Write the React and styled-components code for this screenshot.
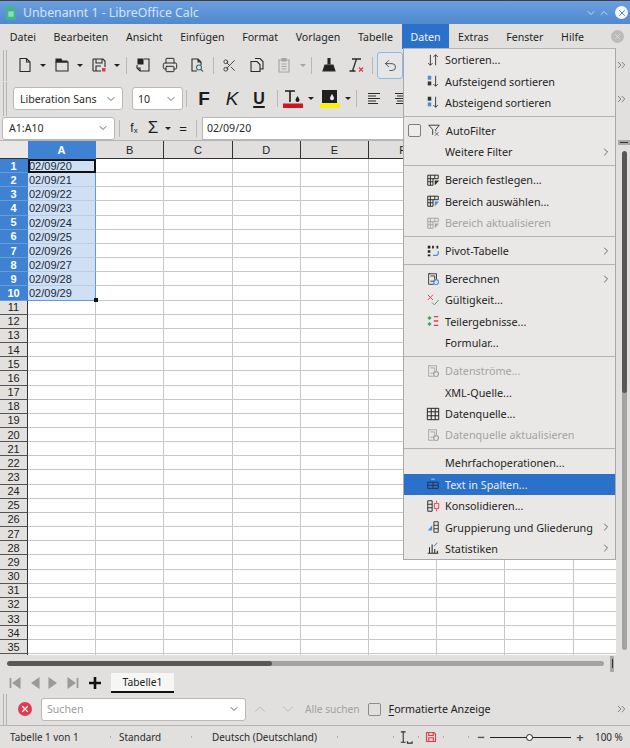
import React from "react";
import styled, { createGlobalStyle } from "styled-components";
import { ChevronDown, ChevronRight, ChevronUp, ChevronsRight, Printer, Scissors, Undo2, X } from "lucide-react";

const GlobalStyle = createGlobalStyle`
  html, body { margin: 0; padding: 0; }
  body { background: #e1e0de; font-family: "Noto Sans", sans-serif; color: #1f1f1f; }
`;

const Window = styled.div`
  position: relative;
  width: 630px;
  height: 748px;
  overflow: hidden;
  display: flex;
  flex-direction: column;
  background: #e1e0de;
`;

const TitleBar = styled.div`
  height: 24px;
  box-sizing: border-box;
  flex: none;
  display: flex;
  align-items: center;
  padding: 0 2px 0 6px;
  background: linear-gradient(#6b9fde, #5089cf);
  border-top: 1px solid #4a3c3c;
  color: #d5e4f6;
  font-size: 12.3px;
`;

const TitleText = styled.span`
  margin-left: 7px;
  flex: 1;
`;

const WinButton = styled.span`
  display: flex;
  width: 13px;
  justify-content: center;
  color: #dceafa;
`;

const CloseDot = styled.span`
  display: flex;
  align-items: center;
  justify-content: center;
  width: 13px;
  height: 13px;
  margin-left: 5px;
  border-radius: 50%;
  background: #f4f8fd;
  color: #4f88cf;
`;

const MenuBar = styled.div`
  height: 25px;
  flex: none;
  display: flex;
  align-items: stretch;
  padding-left: 1px;
  font-size: 10.6px;
`;

const MenuTitle = styled.div`
  display: flex;
  align-items: center;
  padding: 0 8.8px;
  background: ${(p) => (p.$open ? "#2b70c9" : "transparent")};
  color: ${(p) => (p.$open ? "#f1f6fc" : "#1f1f1f")};
`;

const DocClose = styled.div`
  display: flex;
  align-items: center;
  justify-content: center;
  width: 13px;
  height: 13px;
  margin: auto 6px auto auto;
  border-radius: 50%;
  background: #bcbbb9;
  color: #e1e0de;
`;

const ToolRow = styled.div`
  height: ${(p) => p.$h}px;
  flex: none;
  display: flex;
  align-items: center;
  position: relative;
`;

const Grip = styled.div`
  align-self: stretch;
  width: 2px;
  margin: 1px 5px 0 3px;
  border-left: 1px solid #b4b3b1;
  border-right: 1px solid #b4b3b1;
`;

const ToolButton = styled.div`
  width: ${(p) => p.$w || 27}px;
  height: 24px;
  flex: none;
  display: flex;
  align-items: center;
  justify-content: center;
  color: #2a2a2a;
`;

const Focused = styled(ToolButton)`
  width: 26px;
  height: 27px;
  margin-left: 2px;
  box-sizing: border-box;
  border: 1px solid #8dbbe8;
  border-radius: 3px;
  background: #e4e6e8;
`;

const DropArrow = styled.div`
  width: ${(p) => p.$w || 12}px;
  flex: none;
  display: flex;
  justify-content: center;
  &::after {
    content: "";
    border-left: 3px solid transparent;
    border-right: 3px solid transparent;
    border-top: 3px solid ${(p) => (p.$muted ? "#a5a5a5" : "#222")};
  }
`;

const Sep = styled.div`
  width: 1px;
  height: 17px;
  flex: none;
  margin-left: ${(p) => p.$l ?? 2.5}px;
  margin-right: ${(p) => p.$r ?? 2.5}px;
  background: #b8b7b5;
`;

const Combo = styled.div`
  width: ${(p) => p.$w}px;
  height: 23px;
  flex: none;
  box-sizing: border-box;
  display: flex;
  align-items: center;
  justify-content: space-between;
  padding: 0 5px 0 ${(p) => p.$pl || 6}px;
  margin-left: ${(p) => p.$ml || 0}px;
  background: #fff;
  border: 1px solid #b9b8b6;
  border-radius: 3px;
  font-size: 10.6px;
  color: #2a2a2a;
`;

const ComboHint = styled.span`
  color: #9d9d9d;
`;

const GlyphButton = styled(ToolButton)`
  font-size: ${(p) => p.$size || 17}px;
  font-weight: ${(p) => p.$weight || 700};
  font-style: ${(p) => (p.$italic ? "italic" : "normal")};
  text-decoration: ${(p) => (p.$under ? "underline" : "none")};
  text-decoration-thickness: 1.5px;
  text-underline-offset: 2px;
  font-family: "Liberation Sans", sans-serif;
  color: #1c1c1c;
  small { font-size: 8px; margin-top: 5px; }
`;

const OverflowMark = styled.div`
  position: absolute;
  right: 2px;
  top: 50%;
  transform: translateY(-50%);
  display: flex;
  color: #444;
`;

const FormulaBar = styled.div`
  height: 24px;
  flex: none;
  display: flex;
  align-items: center;
  padding-left: 2px;
`;

const FormulaInput = styled.div`
  width: 409px;
  height: 23px;
  flex: none;
  margin-left: 1px;
  box-sizing: border-box;
  display: flex;
  align-items: center;
  padding-left: 4px;
  background: #fff;
  border: 1px solid #b9b8b6;
  font-size: 10.6px;
  color: #2a2a2a;
`;

const Body = styled.div`
  height: 515px;
  flex: none;
  display: flex;
`;

const Sheet = styled.div`
  position: relative;
  width: 616px;
  flex: none;
  overflow: hidden;
  background: #fff;
  border-top: 1px solid #b5b4b2;
  box-sizing: border-box;
`;

const GridRow = styled.div`
  display: flex;
  height: ${(p) => p.$h}px;
`;

const Corner = styled.div`
  width: 28px;
  flex: none;
  box-sizing: border-box;
  background: #e9e8e6;
  border-bottom: 1px solid #333;
`;

const ColHead = styled.div`
  width: 68.2px;
  flex: none;
  box-sizing: border-box;
  display: flex;
  align-items: center;
  justify-content: center;
  font: ${(p) => (p.$on ? 700 : 400)} 11px "Liberation Sans", sans-serif;
  background: ${(p) => (p.$on ? "#3f82d2" : "#e0dfdd")};
  color: ${(p) => (p.$on ? "#fff" : "#222")};
  border-right: 1px solid ${(p) => (p.$on ? "#3f82d2" : "#333")};
  border-bottom: 1px solid ${(p) => (p.$on ? "#3f82d2" : "#333")};
`;

const RowHead = styled.div`
  width: 28px;
  flex: none;
  box-sizing: border-box;
  display: flex;
  align-items: center;
  justify-content: center;
  font: ${(p) => (p.$on ? 700 : 400)} 11px "Liberation Sans", sans-serif;
  background: ${(p) => (p.$on ? "#3f82d2" : "#e2e1df")};
  color: ${(p) => (p.$on ? "#fff" : "#222")};
  border-right: 1px solid ${(p) => (p.$on ? "#3f82d2" : "#333")};
  border-bottom: 1px solid ${(p) => (p.$on ? "#6a9cdc" : "#555")};
`;

const Cell = styled.div`
  width: 68.2px;
  flex: none;
  box-sizing: border-box;
  padding-left: 1px;
  white-space: nowrap;
  font: 11px/14px "Liberation Sans", sans-serif;
  color: #1d2735;
  background: ${(p) => (p.$sel ? "#cfe0f4" : "#fff")};
  border-right: 1px solid ${(p) => (p.$sel ? "#5c9ae0" : "#c8c8c8")};
  border-bottom: 1px solid ${(p) => (p.$last ? "#5c9ae0" : p.$sel ? "#b9cde6" : "#c8c8c8")};
  ${(p) => p.$active && "outline: 2px solid #111; outline-offset: -2px;"}
`;

const FillHandle = styled.div`
  position: absolute;
  left: 94px;
  top: 157px;
  width: 4px;
  height: 4px;
  background: #111;
`;

const VScroll = styled.div`
  width: 14px;
  flex: none;
  display: flex;
  flex-direction: column;
  align-items: center;
  padding-left: 2px;
  box-sizing: border-box;
`;

const VSplit = styled.div`
  width: 100%;
  height: 5px;
  margin-bottom: 6px;
  display: flex;
  align-items: center;
  justify-content: center;
  background: #a9a8a6;
  &::after {
    content: "";
    width: 8px;
    height: 1px;
    background: #333;
  }
`;

const VTrack = styled.div`
  width: 5px;
  flex: 1;
  margin-bottom: 5px;
  border-radius: 3px;
  background: #a3a3a1;
  overflow: hidden;
`;

const VThumb = styled.div`
  height: 242px;
  border-radius: 3px;
  background: #585857;
`;

const HScrollRow = styled.div`
  height: 17px;
  flex: none;
  display: flex;
  align-items: center;
  padding: 0 16px 0 7px;
`;

const HTrack = styled.div`
  width: 597px;
  height: 5px;
  flex: none;
  margin-right: 6px;
  border-radius: 3px;
  background: #a3a3a1;
  overflow: hidden;
`;

const HThumb = styled.div`
  width: 265px;
  height: 100%;
  border-radius: 3px;
  background: #585857;
`;

const HSplit = styled.div`
  width: 4px;
  height: 16px;
  flex: none;
  display: flex;
  justify-content: center;
  background: #a9a8a6;
  &::after {
    content: "";
    width: 1px;
    height: 9px;
    margin-top: 3px;
    background: #333;
  }
`;

const TabBar = styled.div`
  height: 21px;
  flex: none;
  display: flex;
  align-items: center;
  padding-left: 7px;
`;

const SheetTab = styled.div`
  width: 63px;
  height: 20px;
  margin-left: 3px;
  box-sizing: border-box;
  display: flex;
  align-items: center;
  justify-content: center;
  background: #f6f6f5;
  border-bottom: 2px solid #111;
  font-size: 10.3px;
  color: #222;
`;

const FindBar = styled.div`
  position: relative;
  height: 32px;
  flex: none;
  display: flex;
  align-items: center;
`;

const FindCheck = styled.div`
  width: 13px;
  height: 13px;
  flex: none;
  box-sizing: border-box;
  margin-left: 8px;
  border: 1px solid #8b8b89;
  border-radius: 2px;
`;

const FindHint = styled.span`
  margin-left: 4px;
  font-size: 10.2px;
  color: #a2a2a0;
`;

const FindLabel = styled.span`
  margin-left: 8px;
  font-size: 10.7px;
  color: #222;
  u { text-underline-offset: 2px; }
`;

const StatusBar = styled.div`
  height: 23px;
  flex: none;
  box-sizing: border-box;
  display: flex;
  align-items: center;
  border-top: 1px solid #b5b4b2;
  font-size: 9.9px;
  color: #2a2a2a;
`;

const StatusCell = styled.div`
  width: ${(p) => p.$w}px;
  flex: none;
  box-sizing: border-box;
  display: flex;
  align-items: center;
  justify-content: ${(p) => p.$align || "flex-start"};
  padding-left: ${(p) => p.$pad || 0}px;
  white-space: nowrap;
`;

const Dot = styled.span`
  width: 1px;
  height: 2px;
  flex: none;
  background: #b0afad;
`;

const ZoomGroup = styled.div`
  display: flex;
  align-items: center;
  width: 122px;
  flex: none;
  padding-left: 8px;
  box-sizing: border-box;
`;

const ZoomSign = styled.span`
  width: 8px;
  flex: none;
  text-align: center;
  font-size: 13px;
  font-weight: 700;
  line-height: 10px;
  color: #555;
`;

const ZoomTrack = styled.div`
  position: relative;
  width: 81px;
  height: 1px;
  flex: none;
  margin: 0 5px 0 5px;
  background: #222;
`;

const ZoomKnob = styled.span`
  position: absolute;
  left: 36px;
  top: -3px;
  width: 5px;
  height: 5px;
  border: 1px solid #222;
  border-radius: 50%;
  background: #fff;
`;

const Menu = styled.div`
  position: absolute;
  left: 403px;
  top: 48px;
  width: 213px;
  box-sizing: border-box;
  background: #e9e8e6;
  border: 1px solid #a9a8a6;
  border-top-color: #b5b4b2;
  font-size: 10.8px;
`;

const MenuRow = styled.div`
  height: 21.4px;
  display: flex;
  align-items: center;
  color: ${(p) => (p.$active ? "#e6eefa" : p.$off ? "#a3a3a1" : "#1f1f1f")};
  background: ${(p) => (p.$active ? "#2b70c9" : "transparent")};
  white-space: nowrap;
`;

const MenuCheck = styled.div`
  width: 13px;
  height: 13px;
  flex: none;
  box-sizing: border-box;
  margin-left: 4px;
  border: 1px solid #7e7e7c;
  border-radius: 2px;
  background: #eeedeb;
`;

const MenuIcon = styled.div`
  width: 16px;
  height: 16px;
  flex: none;
  display: flex;
  align-items: center;
  justify-content: center;
  margin-left: ${(p) => (p.$afterCheck ? 5 : 21)}px;
  margin-right: 4px;
  svg { width: 14px; height: 14px; }
`;

const MenuLabel = styled.span`
  flex: 1;
`;

const MenuArrow = styled.span`
  display: flex;
  margin-right: 3px;
  color: #333;
`;

const MenuDivider = styled.div`
  height: 6.6px;
  display: flex;
  align-items: center;
  &::after {
    content: "";
    width: 100%;
    height: 1px;
    background: #b4b3b1;
  }
`;

const Ico = ({ s = 16, w = 1.1, c = "#2a2a2a", children }) => (
  <svg width={s} height={s} viewBox="0 0 16 16" fill="none" stroke={c} strokeWidth={w}>
    {children}
  </svg>
);

const NewDoc = () => <Ico><path d="M3 1.5h6.5L13 5v9.5H3zM9.5 1.5V5H13" /></Ico>;
const OpenDoc = () => <Ico><path d="M2 5h12v9H2z" /><path d="M2 2h5l1 2h5v1H2z" fill="#222" /></Ico>;
const SaveDoc = () => (
  <Ico>
    <path d="M2 2h10l2 2v6M10 14H2zM2 2v12M5 2v4h6V2M5 14v-5h5" />
    <rect x="11" y="11" width="3.5" height="3.5" fill="#e23b4e" stroke="none" />
  </Ico>
);
const PdfDoc = () => (
  <Ico>
    <path d="M9 2h5v12H5l-3-3V8" />
    <path d="M3 2h5v5H3z" fill="#222" />
    <path d="M5 14v-3H2" />
  </Ico>
);
const Preview = () => (
  <Ico>
    <path d="M8 14H3V2h6l3 3v3M9 2v3h3" />
    <circle cx="10" cy="10.5" r="2.5" stroke="#2f6f79" />
    <path d="M12 12.5l2 2" stroke="#2f6f79" />
  </Ico>
);
const CopyDoc = () => (
  <Ico>
    <path d="M6 1.5h5l3 3V12h-3" />
    <path d="M2 4.5h6l3 3v7H2z" fill="#e1e0de" />
  </Ico>
);
const PasteDoc = () => (
  <Ico c="#a3a3a1">
    <path d="M3 3h10v12H3z" />
    <path d="M6 1.5h4V4H6z" fill="#a3a3a1" />
    <path d="M5.5 7h5M5.5 9.5h5M5.5 12h5" />
  </Ico>
);
const Brush = () => (
  <Ico>
    <path d="M7 1.5h2V7H7z" fill="#222" />
    <path d="M4 8h8l2 6H2z" fill="#222" />
  </Ico>
);
const ClearFormat = () => (
  <Ico w={1.3}>
    <path d="M4 2h9M8.5 2L4.5 14M1.5 14h6" />
    <path d="M11 10.5l4 4M15 10.5l-4 4" stroke="#e23b4e" />
  </Ico>
);
const FontColor = () => (
  <svg width="22" height="20" viewBox="0 0 22 20" fill="none">
    <path d="M3 2h10M8 2v11" stroke="#1c1c1c" strokeWidth="1.6" />
    <path d="M15.5 7c-1.5 2.5-2 3.2-2 4a2 2 0 0 0 4 0c0-.8-.5-1.5-2-4z" fill="#1c1c1c" />
    <rect x="1" y="14.5" width="20" height="4.5" fill="#c8191e" />
  </svg>
);
const BackColor = () => (
  <svg width="20" height="20" viewBox="0 0 20 20" fill="none">
    <rect x="2" y="1" width="15" height="13" fill="#1f1f1f" />
    <path d="M12 5c-1.5 2.5-2 3.2-2 4.2a2 2 0 0 0 4 0c0-1-.5-1.7-2-4.2z" fill="#e8e8e8" />
    <rect x="0" y="14.5" width="20" height="4.5" fill="#fbf200" />
  </svg>
);
const AlignLeft = () => (
  <Ico>
    <path d="M2 2.5h12M2 5h8M2 7.5h12M2 10h8M2 12.5h10" />
  </Ico>
);
const AlignMid = () => (
  <Ico>
    <path d="M2 2.5h12M4 5h8M2 7.5h12M4 10h8M3 12.5h10" />
  </Ico>
);
const Triangle = ({ dir, bar }) => (
  <Ico c="#9a9a98">
    {bar === "l" && <path d="M2.5 3v10" strokeWidth="1.8" />}
    {dir === "l" ? <path d="M12 3v10L5 8z" fill="#9a9a98" /> : <path d="M4 3v10l7-5z" fill="#9a9a98" />}
    {bar === "r" && <path d="M13.5 3v10" strokeWidth="1.8" />}
  </Ico>
);
const PlusBold = () => (
  <Ico s={16} w={2.6} c="#111">
    <path d="M8 2v12M2 8h12" />
  </Ico>
);
const ErrorDot = () => (
  <svg width="16" height="16" viewBox="0 0 16 16" fill="none">
    <circle cx="8" cy="8" r="7" fill="#e23b50" />
    <path d="M5.3 5.3l5.4 5.4M10.7 5.3l-5.4 5.4" stroke="#fff" strokeWidth="1.3" />
  </svg>
);
const StatusCursor = () => (
  <Ico s={15}>
    <path d="M2 2h5M2 13h5M4.5 2v11M9 12v2h5v-2" />
  </Ico>
);
const StatusSave = () => (
  <Ico s={12} c="#e23b50" w={1.5}>
    <path d="M2 2h10l2 2v10H2zM5 2v4h6V2M5 14v-5h6v5" />
  </Ico>
);

const SortIcon = () => (
  <Ico w={1}>
    <path d="M5 2v12M2.5 11.5L5 14l2.5-2.5M11 14V2M8.5 4.5L11 2l2.5 2.5" />
  </Ico>
);
const SortAz = ({ flip }) => (
  <Ico w={1}>
    <rect x="2" y={flip ? 8.5 : 2} width="4" height="4.5" fill="#4a90d9" stroke="none" />
    <rect x="2" y={flip ? 2 : 8.5} width="4" height="4.5" fill="#333" stroke="none" />
    <path d="M11 2v12M8.5 11.5L11 14l2.5-2.5" />
  </Ico>
);
const FilterIcon = () => (
  <Ico w={1}>
    <path d="M2 2.5h12L10 7.5v2M2 2.5l4.5 5v6" />
    <path d="M9 10.5l4 4M13 10.5l-4 4" stroke="#555" />
  </Ico>
);
const RangeIcon = ({ c = "#2a2a2a", mark = "#2a2a2a" }) => (
  <Ico w={1.1} c={c}>
    <path d="M2 2.5h12v4H8v7.5H2zM2 6.5h6M2 10h6M5 2.5V14M10 2.5v4" />
    <path d="M10 8.5h5L12 12l-2 2z" fill={mark} stroke="none" />
  </Ico>
);
const PivotIcon = () => (
  <Ico w={1}>
    <path d="M2 2h3v3H2zM7 2h2v3H7zM12 2h2v3h-2zM2 7h3v3H2zM2 12h3v2H2z" fill="#222" stroke="none" />
    <path d="M8 13h4c1.5 0 2-1 2-3V8" stroke="#4a90d9" strokeWidth="1.4" />
  </Ico>
);
const CalcIcon = ({ c = "#2a2a2a", mark = "#4a90d9" }) => (
  <Ico w={1} c={c}>
    <path d="M9 14H3V2h9v6M3 2l1.5-.5" />
    <path d="M5 4.5h5v6H5" />
    <circle cx="11.5" cy="11.5" r="2.8" stroke={mark} strokeWidth="1.3" />
  </Ico>
);
const ValidityIcon = () => (
  <Ico w={1.1}>
    <path d="M2 2l6 6M8 2L2 8" stroke="#e23b50" />
    <path d="M7 11l2.5 2.5L14.5 8" stroke="#3fa35b" />
  </Ico>
);
const SubtotalIcon = () => (
  <Ico w={1.6}>
    <path d="M2 4.5h4M4 2.5v4M2 11.5h4M4 9.5v4" stroke="#2f9e5b" />
    <path d="M9 3h5M9 8h5M9 13h5" stroke="#e23b50" />
  </Ico>
);
const GridIcon = ({ c = "#1f1f1f" }) => (
  <Ico w={1.1} c={c}>
    <path d="M1.5 1.5h13v13h-13zM1.5 5.5h13M1.5 10h13M6 1.5v13M10.5 1.5v13" />
  </Ico>
);
const ColumnsIcon = () => (
  <Ico w={1} c="#1c2f45">
    <path d="M2 6h12v7H2zM2 9.5h12M8 6v7" />
    <path d="M6 2.5h4" stroke="#79b3ea" strokeWidth="1.6" />
  </Ico>
);
const ConsolidateIcon = () => (
  <Ico w={1.1}>
    <path d="M2 2h5v12H2zM2 6h5M2 10h5" />
    <path d="M9.5 5h5v6h-5z" stroke="#e23b50" />
    <path d="M12 2v2M12 12v2" stroke="#e23b50" />
  </Ico>
);
const GroupIcon = () => (
  <Ico w={1}>
    <path d="M9 2h5v12H9zM9 6h5M9 10h5" />
    <path d="M2 12l5-6v6z" fill="#4a90d9" stroke="none" />
  </Ico>
);
const StatsIcon = () => (
  <Ico w={1.2}>
    <path d="M2 14h12M4 14V7M7 14V4M10 14v-5M13 14v-3" />
    <path d="M9 6l4-4" stroke="#4a90d9" />
  </Ico>
);

const menuItems = [
  { label: "Sortieren...", icon: <SortIcon /> },
  { label: "Aufsteigend sortieren", icon: <SortAz /> },
  { label: "Absteigend sortieren", icon: <SortAz flip /> },
  "sep",
  { label: "AutoFilter", icon: <FilterIcon />, check: true },
  { label: "Weitere Filter", sub: true },
  "sep",
  { label: "Bereich festlegen...", icon: <RangeIcon /> },
  { label: "Bereich auswählen...", icon: <RangeIcon mark="#4a90d9" /> },
  { label: "Bereich aktualisieren", icon: <RangeIcon c="#a3a3a1" mark="#a3a3a1" />, off: true },
  "sep",
  { label: "Pivot-Tabelle", icon: <PivotIcon />, sub: true },
  "sep",
  { label: "Berechnen", icon: <CalcIcon />, sub: true },
  { label: "Gültigkeit...", icon: <ValidityIcon /> },
  { label: "Teilergebnisse...", icon: <SubtotalIcon /> },
  { label: "Formular..." },
  "sep",
  { label: "Datenströme...", icon: <CalcIcon c="#a3a3a1" mark="#a3a3a1" />, off: true },
  { label: "XML-Quelle..." },
  { label: "Datenquelle...", icon: <GridIcon /> },
  { label: "Datenquelle aktualisieren", icon: <CalcIcon c="#a3a3a1" mark="#a3a3a1" />, off: true },
  "sep",
  { label: "Mehrfachoperationen..." },
  { label: "Text in Spalten...", icon: <ColumnsIcon />, active: true },
  { label: "Konsolidieren...", icon: <ConsolidateIcon /> },
  { label: "Gruppierung und Gliederung", icon: <GroupIcon />, sub: true },
  { label: "Statistiken", icon: <StatsIcon />, sub: true },
];

const menuTitles = ["Datei", "Bearbeiten", "Ansicht", "Einfügen", "Format", "Vorlagen", "Tabelle"];
// G, H and I sit behind the open menu, so their header letters never show
const columns = ["A", "B", "C", "D", "E", "F", "", " ", "  "];
const rows = Array.from({ length: 36 }, (_, i) => i + 1);

const DataMenu = () => (
  <Menu>
    {menuItems.map((item, i) =>
      item === "sep" ? (
        <MenuDivider key={i} />
      ) : (
        <MenuRow key={i} $off={item.off} $active={item.active}>
          {item.check && <MenuCheck />}
          <MenuIcon $afterCheck={item.check}>{item.icon}</MenuIcon>
          <MenuLabel>{item.label}</MenuLabel>
          {item.sub && (
            <MenuArrow>
              <ChevronRight size={12} strokeWidth={1.4} />
            </MenuArrow>
          )}
        </MenuRow>
      )
    )}
  </Menu>
);

const Grid = () => (
  <Sheet>
    <GridRow $h={18}>
      <Corner />
      {columns.map((c) => (
        <ColHead key={c} $on={c === "A"}>{c}</ColHead>
      ))}
    </GridRow>
    {rows.map((r) => (
      <GridRow key={r} $h={14.16}>
        <RowHead $on={r <= 10}>{r <= 35 ? r : ""}</RowHead>
        {columns.map((c) => (
          <Cell
            key={c}
            $sel={c === "A" && r <= 10}
            $last={c === "A" && r === 10}
            $active={c === "A" && r === 1}
          >
            {c === "A" && r <= 10 ? `02/09/${19 + r}` : ""}
          </Cell>
        ))}
      </GridRow>
    ))}
    <FillHandle />
  </Sheet>
);

export default function App() {
  return (
    <Window>
      <GlobalStyle />
      <TitleBar>
        <svg width="10" height="14" viewBox="0 0 9 13">
          <path d="M0 0h6.5L9 2.5V13H0z" fill="#43b58a" />
          <path d="M2 5h5v5H2z" fill="#8fdcbc" />
        </svg>
        <TitleText>Unbenannt 1 - LibreOffice Calc</TitleText>
        <WinButton><ChevronDown size={12} strokeWidth={1.6} /></WinButton>
        <WinButton><ChevronUp size={12} strokeWidth={1.6} /></WinButton>
        <CloseDot><X size={10} strokeWidth={2.4} /></CloseDot>
      </TitleBar>

      <MenuBar>
        {menuTitles.map((t) => (
          <MenuTitle key={t}>{t}</MenuTitle>
        ))}
        <MenuTitle $open>Daten</MenuTitle>
        <MenuTitle>Extras</MenuTitle>
        <MenuTitle>Fenster</MenuTitle>
        <MenuTitle>Hilfe</MenuTitle>
        <DocClose><X size={9} strokeWidth={2} /></DocClose>
      </MenuBar>

      <ToolRow $h={32}>
        <Grip />
        <ToolButton $w={25}><NewDoc /></ToolButton>
        <DropArrow />
        <ToolButton $w={25}><OpenDoc /></ToolButton>
        <DropArrow />
        <ToolButton $w={25}><SaveDoc /></ToolButton>
        <DropArrow />
        <Sep />
        <ToolButton><PdfDoc /></ToolButton>
        <ToolButton><Printer size={16} strokeWidth={1.5} /></ToolButton>
        <ToolButton><Preview /></ToolButton>
        <Sep />
        <ToolButton><Scissors size={15} strokeWidth={1.3} /></ToolButton>
        <ToolButton><CopyDoc /></ToolButton>
        <ToolButton><PasteDoc /></ToolButton>
        <DropArrow $w={11} $muted />
        <Sep $l={3} $r={3} />
        <ToolButton><Brush /></ToolButton>
        <ToolButton><ClearFormat /></ToolButton>
        <Sep />
        <Focused><Undo2 size={15} strokeWidth={1.2} /></Focused>
        <OverflowMark><ChevronsRight size={13} strokeWidth={1.2} /></OverflowMark>
      </ToolRow>

      <ToolRow $h={35}>
        <Grip />
        <Combo $w={110} $ml={1}>Liberation Sans<ChevronDown size={12} strokeWidth={1.4} /></Combo>
        <Combo $w={51} $ml={9} $pl={5}>10<ChevronDown size={12} strokeWidth={1.4} /></Combo>
        <Sep $l={3} $r={1} />
        <GlyphButton $w={32} $size={19}>F</GlyphButton>
        <GlyphButton $w={24} $size={19} $weight={400} $italic>K</GlyphButton>
        <GlyphButton $w={30} $size={16} $under>U</GlyphButton>
        <Sep $l={3} $r={2} />
        <ToolButton $w={26}><FontColor /></ToolButton>
        <DropArrow $w={10} />
        <ToolButton $w={28}><BackColor /></ToolButton>
        <DropArrow $w={8} />
        <Sep $l={4} $r={3} />
        <ToolButton><AlignLeft /></ToolButton>
        <ToolButton><AlignMid /></ToolButton>
        <OverflowMark><ChevronsRight size={13} strokeWidth={1.2} /></OverflowMark>
      </ToolRow>

      <FormulaBar>
        <Combo $w={113}>A1:A10<ChevronDown size={12} strokeWidth={1.4} /></Combo>
        <Sep $l={4} $r={4} />
        <GlyphButton $w={20} $size={12} $weight={400}>f<small>x</small></GlyphButton>
        <GlyphButton $w={18} $size={17} $weight={400}>Σ</GlyphButton>
        <DropArrow $w={12} />
        <GlyphButton $w={18} $size={13} $weight={400}>=</GlyphButton>
        <Sep $l={4} $r={4} />
        <FormulaInput>02/09/20</FormulaInput>
      </FormulaBar>

      <Body>
        <Grid />
        <VScroll>
          <VSplit />
          <VTrack><VThumb /></VTrack>
        </VScroll>
      </Body>

      <HScrollRow>
        <HTrack><HThumb /></HTrack>
        <HSplit />
      </HScrollRow>

      <TabBar>
        <ToolButton $w={18}><Triangle dir="l" bar="l" /></ToolButton>
        <ToolButton $w={19}><Triangle dir="l" /></ToolButton>
        <ToolButton $w={18}><Triangle dir="r" /></ToolButton>
        <ToolButton $w={20}><Triangle dir="r" bar="r" /></ToolButton>
        <ToolButton $w={26}><PlusBold /></ToolButton>
        <SheetTab>Tabelle1</SheetTab>
      </TabBar>

      <FindBar>
        <Grip />
        <ToolButton $w={26}><ErrorDot /></ToolButton>
        <Combo $w={205} $ml={3} $pl={5}>
          <ComboHint>Suchen</ComboHint>
          <ChevronDown size={12} strokeWidth={1.4} color="#222" />
        </Combo>
        <ToolButton $w={28}><ChevronUp size={18} strokeWidth={0.9} color="#a9a9a7" /></ToolButton>
        <ToolButton $w={27}><ChevronDown size={18} strokeWidth={0.9} color="#a9a9a7" /></ToolButton>
        <FindHint>Alle suchen</FindHint>
        <FindCheck />
        <FindLabel><u>F</u>ormatierte Anzeige</FindLabel>
        <OverflowMark><ChevronsRight size={13} strokeWidth={1.2} /></OverflowMark>
      </FindBar>

      <StatusBar>
        <StatusCell $w={110} $pad={10}>Tabelle 1 von 1</StatusCell>
        <Dot />
        <StatusCell $w={80} $pad={8}>Standard</StatusCell>
        <Dot />
        <StatusCell $w={145} $align="center">Deutsch (Deutschland)</StatusCell>
        <Dot />
        <StatusCell $w={55} />
        <Dot />
        <StatusCell $w={24} $align="center"><StatusCursor /></StatusCell>
        <Dot />
        <StatusCell $w={24} $align="center"><StatusSave /></StatusCell>
        <Dot />
        <StatusCell $w={24} />
        <Dot />
        <ZoomGroup>
          <ZoomSign>−</ZoomSign>
          <ZoomTrack><ZoomKnob /></ZoomTrack>
          <ZoomSign>+</ZoomSign>
        </ZoomGroup>
        <StatusCell $w={36} $pad={4}>100 %</StatusCell>
      </StatusBar>

      <DataMenu />
    </Window>
  );
}
